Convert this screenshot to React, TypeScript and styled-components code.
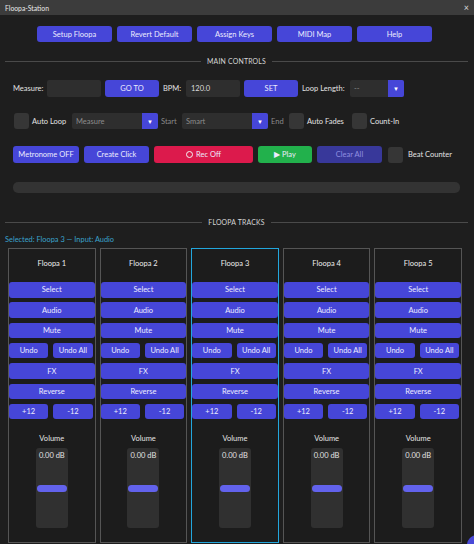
import React from "react";
import styled, { createGlobalStyle } from "styled-components";

const Global = createGlobalStyle`
  html, body { margin: 0; padding: 0; background: #1e1e1e; }
  body { font-family: Lato, "Open Sans", sans-serif; }
  * { box-sizing: border-box; }
`;

const Window = styled.div`
  position: relative;
  width: 474px;
  height: 544px;
  overflow: hidden;
  background: #1e1e1e;
  display: flex;
  flex-direction: column;
  color: #e6e6e6;
  font-size: 7.5px;
`;

const TitleBar = styled.div`
  height: 15px;
  flex: none;
  background: #3c3c3c;
  display: flex;
  align-items: center;
  justify-content: space-between;
  padding: 0 5px;
  font-size: 6.8px;
  color: #e8e8e8;
`;

const CloseGlyph = styled.span`
  font-size: 9px;
  color: #d8d8d8;
  line-height: 1;
`;

const Content = styled.div`
  display: flex;
  flex-direction: column;
  padding: 0 6px 0 5px;
`;

const TopBar = styled.div`
  margin-top: 11px;
  display: flex;
  justify-content: center;
  gap: 5px;
  padding-right: 4px;
`;

const Button = styled.button<{ $w?: number; $tone?: "blue" | "red" | "green" | "dim"; $h?: number }>`
  width: ${(p) => (p.$w ? `${p.$w}px` : "auto")};
  height: ${(p) => (p.$h ? `${p.$h}px` : "16px")};
  flex: none;
  border: none;
  border-radius: 3px;
  padding: 0;
  font-family: Lato, "Open Sans", sans-serif;
  font-size: 7.5px;
  display: flex;
  align-items: center;
  justify-content: center;
  gap: 3px;
  background: ${(p) =>
    p.$tone === "red" ? "#dc1a4c" : p.$tone === "green" ? "#22b14c" : p.$tone === "dim" ? "#38389a" : "#4646d8"};
  color: ${(p) => (p.$tone === "dim" ? "#8f8fe0" : "#ececff")};
`;

const Separator = styled.div<{ $top: number }>`
  margin-top: ${(p) => p.$top}px;
  height: 10px;
  display: flex;
  align-items: center;
  gap: 6px;
  font-size: 6.9px;
  color: #d6d6d6;
  letter-spacing: 0.2px;
  &::before, &::after {
    content: "";
    flex: 1;
    height: 1px;
    background: #4a4a4a;
  }
`;

const Row = styled.div<{ $top: number; $gap: number; $h: number }>`
  margin-top: ${(p) => p.$top}px;
  height: ${(p) => p.$h}px;
  padding-left: 8px;
  display: flex;
  align-items: center;
  gap: ${(p) => p.$gap}px;
`;

const Label = styled.span<{ $w: number; $dim?: boolean }>`
  width: ${(p) => p.$w}px;
  flex: none;
  white-space: nowrap;
  color: ${(p) => (p.$dim ? "#8a8a8a" : "#e2e2e2")};
`;

const Field = styled.div<{ $w: number }>`
  width: ${(p) => p.$w}px;
  height: 17px;
  flex: none;
  background: #2e2e2e;
  border-radius: 2px;
  display: flex;
  align-items: center;
  padding-left: 5px;
  color: #dcdcdc;
`;

const Combo = styled.div<{ $w: number; $h: number }>`
  width: ${(p) => p.$w}px;
  height: ${(p) => p.$h}px;
  flex: none;
  background: #2e2e2e;
  border-radius: 2px;
  display: flex;
  align-items: stretch;
  overflow: hidden;
`;

const ComboText = styled.span<{ $dim?: boolean }>`
  flex: 1;
  display: flex;
  align-items: center;
  padding-left: 4px;
  color: ${(p) => (p.$dim ? "#8c8c8c" : "#bdbdbd")};
`;

const ComboArrow = styled.span`
  width: 16px;
  flex: none;
  background: #4646d8;
  display: flex;
  align-items: center;
  justify-content: center;
  color: #ffffff;
  font-size: 6px;
`;

const Check = styled.span<{ $ml?: number }>`
  width: 15px;
  height: 16px;
  flex: none;
  margin-left: ${(p) => p.$ml ?? 0}px;
  background: #363636;
  border-radius: 3px;
`;

const RecCircle = styled.span`
  width: 7px;
  height: 7px;
  border: 1px solid #f4f4f4;
  border-radius: 50%;
`;

const Progress = styled.div`
  margin: 19px 8px 0 8px;
  height: 11px;
  background: #333333;
  border-radius: 5px;
`;

const SelectedInfo = styled.div`
  margin-top: 7px;
  height: 10px;
  display: flex;
  align-items: center;
  color: #3aa2cc;
  font-size: 7.4px;
`;

const Tracks = styled.div`
  margin-top: 4px;
  margin-left: 8px;
  width: 454px;
  display: grid;
  grid-template-columns: repeat(5, 1fr);
  gap: 4px;
`;

const Track = styled.div<{ $selected?: boolean }>`
  border: 1px solid ${(p) => (p.$selected ? "#22a6dc" : "#555555")};
  background: #1c1c1c;
  display: flex;
  flex-direction: column;
  align-items: stretch;
  padding-bottom: 14px;
`;

const TrackTitle = styled.div`
  height: 33px;
  padding-top: 10px;
  text-align: center;
  line-height: 9px;
  color: #ececec;
`;

const Stack = styled.div`
  display: flex;
  flex-direction: column;
  gap: 4.83px;
`;

const Pair = styled.div`
  display: flex;
  gap: 5px;
  padding-right: 2px;
  & > * { flex: 1; }
`;

const VolumeLabel = styled.div`
  margin-top: 15px;
  height: 9px;
  line-height: 9px;
  text-align: center;
  color: #e4e4e4;
`;

const Fader = styled.div`
  position: relative;
  margin: 4.5px auto 0 auto;
  width: 32px;
  height: 80px;
  background: #303030;
  border-radius: 3px;
  padding-top: 4px;
  text-align: center;
  line-height: 8px;
  color: #e2e2e2;
  white-space: nowrap;
`;

const Thumb = styled.div`
  position: absolute;
  left: 1px;
  right: 1px;
  top: 37px;
  height: 7px;
  border-radius: 3.5px;
  background: #6262ec;
`;

const CornerBadge = styled.div`
  position: absolute;
  left: 467px;
  top: 535px;
  width: 20px;
  height: 20px;
  border-radius: 50%;
  background: #4a4ad8;
`;

const topButtons = ["Setup Floopa", "Revert Default", "Assign Keys", "MIDI Map", "Help"];
const tracks = [1, 2, 3, 4, 5];

export default function App() {
  return (
    <>
      <Global />
      <Window>
        <TitleBar>
          <span>Floopa-Station</span>
          <CloseGlyph>×</CloseGlyph>
        </TitleBar>
        <Content>
          <TopBar>
            {topButtons.map((t) => (
              <Button key={t} $w={75}>
                {t}
              </Button>
            ))}
          </TopBar>

          <Separator $top={14}>MAIN CONTROLS</Separator>

          <Row $top={14} $gap={4} $h={17}>
            <Label $w={30}>Measure:</Label>
            <Field $w={54} />
            <Button $w={54} $h={17}>GO TO</Button>
            <Label $w={19}>BPM:</Label>
            <Field $w={54}>120.0</Field>
            <Button $w={54} $h={17}>SET</Button>
            <Label $w={44}>Loop Length:</Label>
            <Combo $w={54} $h={17}>
              <ComboText $dim>--</ComboText>
              <ComboArrow>▼</ComboArrow>
            </Combo>
          </Row>

          <Row $top={16} $gap={3} $h={16}>
            <Check $ml={1} />
            <Label $w={37}>Auto Loop</Label>
            <Combo $w={86} $h={16}>
              <ComboText $dim>Measure</ComboText>
              <ComboArrow>▼</ComboArrow>
            </Combo>
            <Label $w={18} $dim>Start</Label>
            <Combo $w={86} $h={16}>
              <ComboText $dim>Smart</ComboText>
              <ComboArrow>▼</ComboArrow>
            </Combo>
            <Label $w={15} $dim>End</Label>
            <Check />
            <Label $w={42}>Auto Fades</Label>
            <Check />
            <Label $w={40}>Count-In</Label>
          </Row>

          <Row $top={17} $gap={5} $h={17}>
            <Button $w={66} $h={17}>Metronome OFF</Button>
            <Button $w={65} $h={17}>Create Click</Button>
            <Button $w={99} $h={17} $tone="red">
              <RecCircle />
              Rec Off
            </Button>
            <Button $w={54} $h={17} $tone="green">▶ Play</Button>
            <Button $w={65} $h={17} $tone="dim">Clear All</Button>
            <Check $ml={1} />
            <Label $w={50}>Beat Counter</Label>
          </Row>

          <Progress />

          <Separator $top={24}>FLOOPA TRACKS</Separator>

          <SelectedInfo>Selected: Floopa 3 — Input: Audio</SelectedInfo>
        </Content>

        <Tracks>
          {tracks.map((n) => (
            <Track key={n} $selected={n === 3}>
              <TrackTitle>Floopa {n}</TrackTitle>
              <Stack>
                <Button $h={15.5}>Select</Button>
                <Button $h={15.5}>Audio</Button>
                <Button $h={15.5}>Mute</Button>
                <Pair>
                  <Button $h={15.5}>Undo</Button>
                  <Button $h={15.5}>Undo All</Button>
                </Pair>
                <Button $h={15.5}>FX</Button>
                <Button $h={15.5}>Reverse</Button>
                <Pair>
                  <Button $h={15.5}>+12</Button>
                  <Button $h={15.5}>-12</Button>
                </Pair>
              </Stack>
              <VolumeLabel>Volume</VolumeLabel>
              <Fader>
                0.00 dB
                <Thumb />
              </Fader>
            </Track>
          ))}
        </Tracks>
        <CornerBadge />
      </Window>
    </>
  );
}
